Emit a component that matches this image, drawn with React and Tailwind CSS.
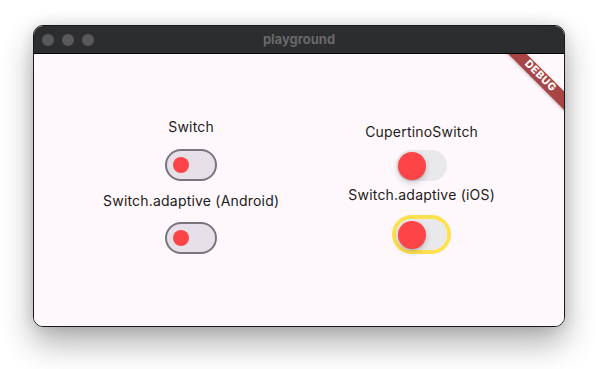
const font = { fontFamily: 'Inter, "Noto Sans", sans-serif' };

const MaterialSwitch = () => (
  <div className="relative w-[52px] h-[32px] rounded-full bg-[#e6e0e9] border-2 border-[#79747e]">
    <div className="absolute left-[6px] top-[6px] w-[16px] h-[16px] rounded-full bg-[#fd4447]" />
  </div>
);

const CupertinoSwitch = () => (
  <div className="relative w-[51px] h-[31px] rounded-full bg-[#e9e8eb]">
    <div className="absolute left-[1.5px] top-[1.5px] w-[28px] h-[28px] rounded-full bg-[#fd4447] shadow-[0_3px_6px_rgba(0,0,0,0.18),0_1px_1px_rgba(0,0,0,0.12)]" />
  </div>
);

const Label = ({ children }) => (
  <p className="h-[18px] leading-[18px] text-[14px] tracking-[0.2px] text-[#1d1b20] whitespace-nowrap">{children}</p>
);

export default function App() {
  return (
    <div className="w-[598px] h-[369px] bg-white pl-[33px] pt-[25px]" style={font}>
      <div className="w-[532px] h-[302px] rounded-[10px] border border-[#1a1a1a] overflow-hidden flex flex-col shadow-[0_16px_32px_rgba(0,0,0,0.32),0_0_14px_rgba(0,0,0,0.12)]">
        {/* Title bar */}
        <div className="h-[28px] bg-[#2c2d2f] grid grid-cols-[1fr_auto_1fr] items-center border-b border-black">
          <div className="flex items-center gap-[8px] pl-[8px]">
            <span className="w-[12px] h-[12px] rounded-full bg-[#59595b]" />
            <span className="w-[12px] h-[12px] rounded-full bg-[#59595b]" />
            <span className="w-[12px] h-[12px] rounded-full bg-[#59595b]" />
          </div>
          <span className="text-[13px] font-bold text-[#68686a]">playground</span>
          <div />
        </div>

        {/* Content */}
        <div className="relative flex-1 bg-[#fef8fc] overflow-hidden flex justify-evenly items-start">
          <div className="flex flex-col items-center pt-[64px]">
            <Label>Switch</Label>
            <div className="mt-[13px]"><MaterialSwitch /></div>
            <div className="mt-[11px]"><Label>Switch.adaptive (Android)</Label></div>
            <div className="mt-[12px]"><MaterialSwitch /></div>
          </div>

          <div className="flex flex-col items-center pt-[69px]">
            <Label>CupertinoSwitch</Label>
            <div className="mt-[9px]"><CupertinoSwitch /></div>
            <div className="mt-[5px]"><Label>Switch.adaptive (iOS)</Label></div>
            <div className="mt-[11px] rounded-full border-[4px] border-[#ffe14f]">
              <CupertinoSwitch />
            </div>
          </div>

          {/* Debug banner */}
          <div className="absolute left-[446px] top-[16px] w-[120px] h-[13px] rotate-45 bg-[#a94444] shadow-[0_1px_3px_rgba(0,0,0,0.25)] flex items-center justify-center">
            <span className="text-[10.5px] font-extrabold tracking-[0.6px] text-white leading-none">DEBUG</span>
          </div>
        </div>
      </div>
    </div>
  );
}
